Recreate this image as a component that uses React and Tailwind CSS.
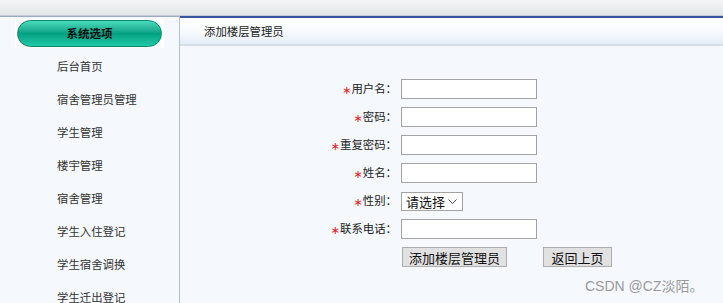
import { useState } from 'react';

const menu = ['后台首页', '宿舍管理员管理', '学生管理', '楼宇管理', '宿舍管理', '学生入住登记', '学生宿舍调换', '学生迁出登记'];

const fields = [
  { label: '用户名', name: 'username' },
  { label: '密码', name: 'password', type: 'password' },
  { label: '重复密码', name: 'password2', type: 'password' },
  { label: '姓名', name: 'realName' },
];

function Label({ children }) {
  return (
    <span className="text-right text-[11.4px] text-[#222]">
      <span className="relative top-[1px] font-['DejaVu_Sans',sans-serif] text-[11px] text-[#e0202a]">∗</span>
      {children}：
    </span>
  );
}

function App() {
  const [sex, setSex] = useState('');

  return (
    <div className="relative flex h-[303px] w-[723px] flex-col overflow-hidden bg-[#f5f8fd] font-['Noto_Sans_CJK_SC',sans-serif]">
      <div className="h-[16px] shrink-0 border-b border-[#c6ccd4] bg-gradient-to-b from-[#f4f6f6] to-[#e2e6e7]" />

      <div className="flex min-h-0 flex-1">
        {/* left menu */}
        <aside className="w-[180px] shrink-0 border-r border-t border-[#b4c1d2] border-t-[#9aabc4] bg-[#f5f8fc]">
          <div className="mx-[15px] mt-[2px] bg-white px-[2px] py-[1px]">
            <div className="flex h-[27px] items-center justify-center rounded-full border border-[#07876a] bg-gradient-to-b from-[#48dcbd] via-[#02a083] to-[#1fc9a6] text-[11.5px] font-bold text-[#111]">
              系统选项
            </div>
          </div>
          <ul className="mt-[2px]">
            {menu.map((item) => (
              <li key={item} className="flex h-[33px] items-center pl-[57px] text-[11.4px] text-[#333]">
                {item}
              </li>
            ))}
          </ul>
        </aside>

        {/* content */}
        <main className="flex-1 border-t-2 border-[#36589a]">
          <div className="flex h-[28px] items-center border-b-2 border-[#d6dee8] bg-gradient-to-b from-[#fdfeff] via-[#f8fbfd] to-[#e4edf7] pl-[24px] pt-[1px] text-[11.4px] text-[#222]">
            添加楼层管理员
          </div>

          <form className="grid grid-cols-[217px_auto] items-center gap-x-[4px] gap-y-[8px] pt-[33px]">
            {fields.map((f) => (
              <div key={f.name} className="contents">
                <Label>{f.label}</Label>
                <input
                  type={f.type || 'text'}
                  className="h-[20px] w-[136px] border border-[#a3a3a3] bg-white px-1 text-[12px]"
                />
              </div>
            ))}

            <Label>性别</Label>
            <div className="relative flex h-[20px] w-[62px] items-center">
              <select
                value={sex}
                onChange={(e) => setSex(e.target.value)}
                className="h-[19px] w-[62px] appearance-none border border-[#a3a3a3] bg-white pl-[4px] text-[13px] leading-[17px] text-[#111]"
              >
                <option value="">请选择</option>
                <option value="男">男</option>
                <option value="女">女</option>
              </select>
              <svg className="pointer-events-none absolute right-[6px] top-[8px]" width="9" height="5" viewBox="0 0 9 5">
                <path d="M0.5 0.5 L4.5 4.5 L8.5 0.5" fill="none" stroke="#444" strokeWidth="1" />
              </svg>
            </div>

            <Label>联系电话</Label>
            <input className="h-[20px] w-[136px] border border-[#a3a3a3] bg-white px-1 text-[12px]" />

            <span />
            <div className="flex gap-[36px] pl-[1px]">
              <button type="button" className="h-[20px] w-[105px] border border-[#adadad] bg-[#e1e1e1] text-[13px] leading-none text-[#111]">
                添加楼层管理员
              </button>
              <button type="button" className="h-[20px] w-[69px] border border-[#adadad] bg-[#e1e1e1] text-[13px] leading-none text-[#111]">
                返回上页
              </button>
            </div>
          </form>
        </main>
      </div>

      <span className="absolute left-[585px] top-[276px] font-['Liberation_Sans','Noto_Sans_CJK_SC',sans-serif] text-[14px] text-[#9a9a9a]">
        CSDN @CZ淡陌。
      </span>
    </div>
  );
}

export default App;
